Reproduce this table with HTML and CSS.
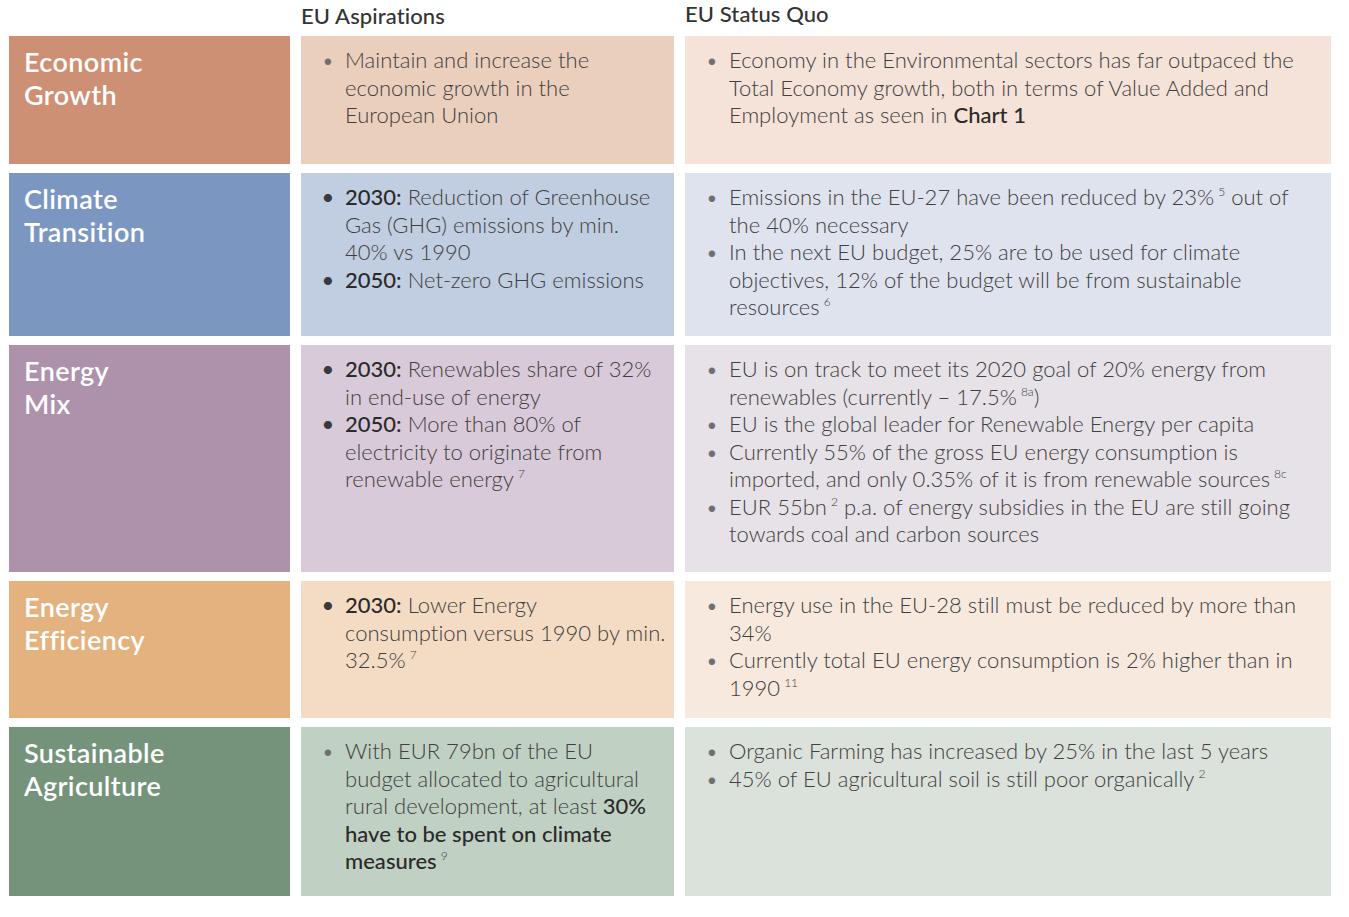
FILE: index.html
```html
<!DOCTYPE html>
<html lang="en">
<head>
<meta charset="utf-8">
<title>EU Aspirations vs Status Quo</title>
<link rel="stylesheet" href="styles.css">
</head>
<body>
<div class="table">
  <div class="head empty"></div>
  <div class="head h-asp">EU Aspirations</div>
  <div class="head h-sq">EU Status Quo</div>

  <div class="label r1">Economic<br>Growth</div>
  <div class="cell asp r1">
    <ul><li>Maintain and increase the economic growth in the European Union</li></ul>
  </div>
  <div class="cell sq r1">
    <ul><li>Economy in the Environmental sectors has far outpaced the Total Economy growth, both in terms of Value Added and Employment as seen in <b>Chart 1</b></li></ul>
  </div>

  <div class="label r2">Climate<br>Transition</div>
  <div class="cell asp r2">
    <ul>
      <li class="strong"><b>2030:</b> Reduction of Greenhouse Gas (GHG) emissions by min. 40% vs 1990</li>
      <li class="strong"><b>2050:</b> Net-zero GHG emissions</li>
    </ul>
  </div>
  <div class="cell sq r2">
    <ul>
      <li>Emissions in the EU-27 have been reduced by 23%<sup>5</sup> out of the 40% necessary</li>
      <li>In the next EU budget, 25% are to be used for climate objectives, 12% of the budget will be from sustainable resources<sup>6</sup></li>
    </ul>
  </div>

  <div class="label r3">Energy<br>Mix</div>
  <div class="cell asp r3">
    <ul>
      <li class="strong"><b>2030:</b> Renewables share of 32% in end-use of energy</li>
      <li class="strong"><b>2050:</b> More than 80% of electricity to originate from renewable energy<sup>7</sup></li>
    </ul>
  </div>
  <div class="cell sq r3">
    <ul>
      <li>EU is on track to meet its 2020 goal of 20% energy from renewables (currently – 17.5%<sup>8a</sup>)</li>
      <li>EU is the global leader for Renewable Energy per capita</li>
      <li>Currently 55% of the gross EU energy consumption is imported, and only 0.35% of it is from renewable sources<sup>8c</sup></li>
      <li>EUR 55bn<sup>2</sup> p.a. of energy subsidies in the EU are still going towards coal and carbon sources</li>
    </ul>
  </div>

  <div class="label r4">Energy<br>Efficiency</div>
  <div class="cell asp r4">
    <ul>
      <li class="strong"><b>2030:</b> Lower Energy<br><span class="nowrap">consumption versus 1990 by min.</span> 32.5%<sup>7</sup></li>
    </ul>
  </div>
  <div class="cell sq r4">
    <ul>
      <li>Energy use in the EU-28 still must be reduced by more than 34%</li>
      <li>Currently total EU energy consumption is 2% higher than in 1990<sup>11</sup></li>
    </ul>
  </div>

  <div class="label r5">Sustainable<br>Agriculture</div>
  <div class="cell asp r5">
    <ul>
      <li>With EUR 79bn of the EU budget allocated to agricultural rural development, at least <b>30% have to be spent on climate measures</b><sup>9</sup></li>
    </ul>
  </div>
  <div class="cell sq r5">
    <ul>
      <li>Organic Farming has increased by 25% in the last 5 years</li>
      <li>45% of EU agricultural soil is still poor organically<sup>2</sup></li>
    </ul>
  </div>
</div>
</body>
</html>
```

FILE: styles.css
```css
html, body {
  margin: 0;
  padding: 0;
  background: #ffffff;
}

body {
  font-family: "Lato", "Open Sans", "Liberation Sans", sans-serif;
  color: #404040;
}

.table {
  display: grid;
  grid-template-columns: 281px 373px 646px;
  grid-template-rows: 27px 128px 163px 227px 137px 169px;
  column-gap: 11px;
  row-gap: 9px;
  padding: 0 0 0 9px;
}

.head {
  font-size: 22px;
  font-weight: 500;
  color: #333333;
  align-self: end;
  line-height: 26px;
  letter-spacing: 0.1px;
}

.h-asp {
  transform: translateY(2px);
}

.label {
  color: #ffffff;
  font-size: 27px;
  font-weight: 600;
  line-height: 33px;
  padding: 9px 0 0 15px;
  letter-spacing: 0.4px;
}

.cell {
  font-size: 22px;
  font-weight: 300;
  line-height: 27.5px;
  padding: 10px 8px 0 44px;
  letter-spacing: 0.02px;
}

.cell.asp {
  padding-right: 14px;
}

.nowrap {
  white-space: nowrap;
}

.cell ul {
  list-style: none;
  margin: 0;
  padding: 0;
}

.cell li::before {
  content: "•";
  display: inline-block;
  width: 34px;
  margin-left: -34px;
  text-align: center;
  color: #707070;
  font-weight: 300;
}

.cell li.strong::before {
  color: #3a3a3a;
  font-weight: 400;
}

.cell b {
  font-weight: 500;
  color: #2a2a2a;
}

sup {
  font-size: 12px;
  line-height: 0;
  vertical-align: 9px;
  margin-left: 4px;
}

.label.r1 { background: #cd9074; }
.asp.r1 { background: #ebcfbd; }
.sq.r1 { background: #f5e2d8; }

.label.r2 { background: #7b96c0; }
.asp.r2 { background: #c1cde0; }
.sq.r2 { background: #dfe3ee; }

.label.r3 { background: #ae91ab; }
.asp.r3 { background: #d9cad9; }
.sq.r3 { background: #e7e2e8; }

.label.r4 { background: #e4b27f; }
.asp.r4 { background: #f4dcc4; }
.sq.r4 { background: #f7e9de; }

.label.r5 { background: #74937a; }
.asp.r5 { background: #c0d0c2; }
.sq.r5 { background: #dbe2db; }
```
